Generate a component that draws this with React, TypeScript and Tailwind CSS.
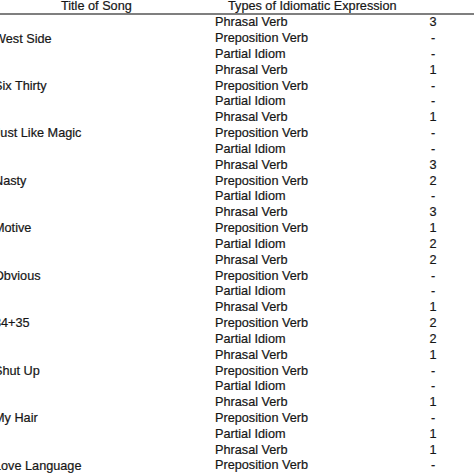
const groups = [
  { title: 'West Side', counts: ['3', '-', '-'] },
  { title: 'Six Thirty', counts: ['1', '-', '-'] },
  { title: 'Just Like Magic', counts: ['1', '-', '-'] },
  { title: 'Nasty', counts: ['3', '2', '-'] },
  { title: 'Motive', counts: ['3', '1', '2'] },
  { title: 'Obvious', counts: ['2', '-', '-'] },
  { title: '34+35', counts: ['1', '2', '2'] },
  { title: 'Shut Up', counts: ['1', '-', '-'] },
  { title: 'My Hair', counts: ['1', '-', '1'] },
  { title: 'Love Language', counts: ['1', '-', '-'] },
];

const types = ['Phrasal Verb', 'Preposition Verb', 'Partial Idiom'];

export default function App() {
  return (
    <div className="w-[474px] h-[474px] overflow-hidden bg-white text-[#161616] text-[12.7px] [-webkit-text-stroke:0.2px_#161616] font-['Liberation_Sans',Arial,sans-serif]">
      {/* Header */}
      <div className="grid grid-cols-[215px_1fr] h-[13.3px] leading-[13.3px] border-b-2 border-[#7f7f7f] box-content">
        <div className="pl-[61px] whitespace-nowrap">Title of Song</div>
        <div className="pl-[13px] whitespace-nowrap">Types of Idiomatic Expression</div>
      </div>

      {/* Rows: song title spans its three expression types */}
      {groups.map((g) => (
        <div key={g.title} className="grid grid-cols-[215px_200px_36px]">
          <div className="row-span-3 flex items-center -ml-[6px] whitespace-nowrap">{g.title}</div>
          {types.map((t, i) => (
            <div key={t} className="contents">
              <div className="h-[15.84px] leading-[15.84px] whitespace-nowrap">{t}</div>
              <div className="h-[15.84px] leading-[15.84px] text-center">{g.counts[i]}</div>
            </div>
          ))}
        </div>
      ))}
    </div>
  );
}
